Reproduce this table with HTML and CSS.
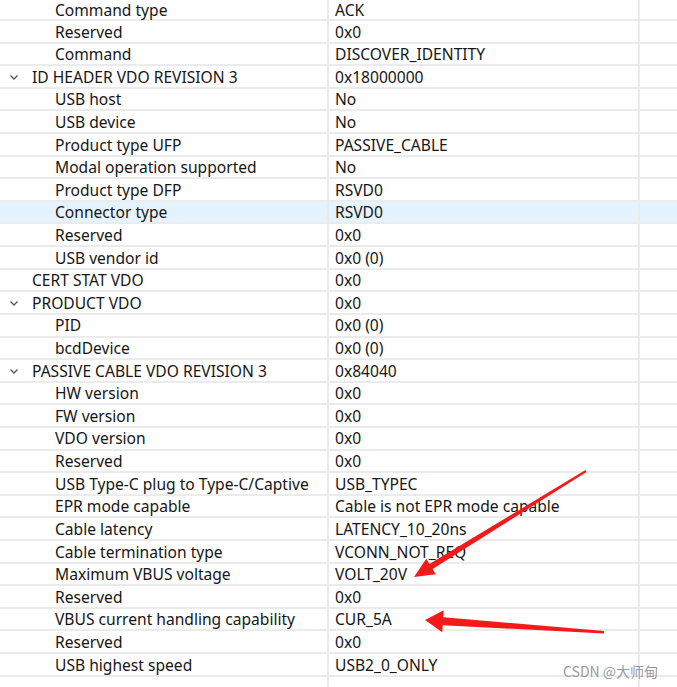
FILE: index.html
```html
<!DOCTYPE html>
<html>
<head>
<meta charset="utf-8">
<link rel="stylesheet" href="styles.css">
</head>
<body>
<div class="tree">
  <div class="row first"><div class="name child">Command type</div><div class="val">ACK</div><div class="fill"></div></div>
  <div class="row"><div class="name child">Reserved</div><div class="val">0x0</div><div class="fill"></div></div>
  <div class="row"><div class="name child">Command</div><div class="val">DISCOVER_IDENTITY</div><div class="fill"></div></div>
  <div class="row"><div class="name group"><svg class="chev" viewBox="0 0 8 5"><path d="M0.5 0.5 L4 4 L7.5 0.5" /></svg>ID HEADER VDO REVISION 3</div><div class="val">0x18000000</div><div class="fill"></div></div>
  <div class="row"><div class="name child">USB host</div><div class="val">No</div><div class="fill"></div></div>
  <div class="row"><div class="name child">USB device</div><div class="val">No</div><div class="fill"></div></div>
  <div class="row"><div class="name child">Product type UFP</div><div class="val">PASSIVE_CABLE</div><div class="fill"></div></div>
  <div class="row"><div class="name child">Modal operation supported</div><div class="val">No</div><div class="fill"></div></div>
  <div class="row"><div class="name child">Product type DFP</div><div class="val">RSVD0</div><div class="fill"></div></div>
  <div class="row selected"><div class="name child">Connector type</div><div class="val">RSVD0</div><div class="fill"></div></div>
  <div class="row"><div class="name child">Reserved</div><div class="val">0x0</div><div class="fill"></div></div>
  <div class="row"><div class="name child">USB vendor id</div><div class="val">0x0 (0)</div><div class="fill"></div></div>
  <div class="row"><div class="name group plain">CERT STAT VDO</div><div class="val">0x0</div><div class="fill"></div></div>
  <div class="row"><div class="name group"><svg class="chev" viewBox="0 0 8 5"><path d="M0.5 0.5 L4 4 L7.5 0.5" /></svg>PRODUCT VDO</div><div class="val">0x0</div><div class="fill"></div></div>
  <div class="row"><div class="name child">PID</div><div class="val">0x0 (0)</div><div class="fill"></div></div>
  <div class="row"><div class="name child">bcdDevice</div><div class="val">0x0 (0)</div><div class="fill"></div></div>
  <div class="row"><div class="name group"><svg class="chev" viewBox="0 0 8 5"><path d="M0.5 0.5 L4 4 L7.5 0.5" /></svg>PASSIVE CABLE VDO REVISION 3</div><div class="val">0x84040</div><div class="fill"></div></div>
  <div class="row"><div class="name child">HW version</div><div class="val">0x0</div><div class="fill"></div></div>
  <div class="row"><div class="name child">FW version</div><div class="val">0x0</div><div class="fill"></div></div>
  <div class="row"><div class="name child">VDO version</div><div class="val">0x0</div><div class="fill"></div></div>
  <div class="row"><div class="name child">Reserved</div><div class="val">0x0</div><div class="fill"></div></div>
  <div class="row"><div class="name child">USB Type-C plug to Type-C/Captive</div><div class="val">USB_TYPEC</div><div class="fill"></div></div>
  <div class="row"><div class="name child">EPR mode capable</div><div class="val">Cable is not EPR mode capable</div><div class="fill"></div></div>
  <div class="row"><div class="name child">Cable latency</div><div class="val">LATENCY_10_20ns</div><div class="fill"></div></div>
  <div class="row"><div class="name child">Cable termination type</div><div class="val">VCONN_NOT_REQ</div><div class="fill"></div></div>
  <div class="row"><div class="name child">Maximum VBUS voltage</div><div class="val">VOLT_20V</div><div class="fill"></div></div>
  <div class="row"><div class="name child">Reserved</div><div class="val">0x0</div><div class="fill"></div></div>
  <div class="row"><div class="name child">VBUS current handling capability</div><div class="val">CUR_5A</div><div class="fill"></div></div>
  <div class="row"><div class="name child">Reserved</div><div class="val">0x0</div><div class="fill"></div></div>
  <div class="row"><div class="name child">USB highest speed</div><div class="val">USB2_0_ONLY</div><div class="fill"></div></div>
  <div class="row empty"><div class="name"></div><div class="val"></div><div class="fill"></div></div>
</div>
<svg class="arrows" viewBox="0 0 677 687" width="677" height="687">
  <polygon points="586.5,471.9 432.6,569.1 435.7,574.2 414,577 426.3,558.8 429.4,563.9 585.5,470.1" />
  <polygon points="604,631 443.3,617.2 443.7,610.2 425,620 442.3,632.2 442.7,625.2 604,633.5" />
</svg>
<div class="watermark">CSDN @大师甸</div>
</body>
</html>
```
FILE: styles.css
```css
html, body {
  margin: 0;
  padding: 0;
  background: #ffffff;
  overflow: hidden;
}
body {
  width: 677px;
  height: 687px;
  position: relative;
  font-family: "Noto Sans", "Noto Sans CJK SC", sans-serif;
  font-size: 15.6px;
  color: #161616;
}
.tree {
  display: flex;
  flex-direction: column;
}
.row {
  display: grid;
  grid-template-columns: 329px 311px 1fr;
  height: 22.62px;
  flex-shrink: 0;
  box-sizing: border-box;
  border-bottom: 2px solid #ebebeb;
}
.row.first {
  height: 21px;
}
.row.selected {
  background: #e5f3ff;
}
.row.empty {
  height: 40px;
  border-bottom: none;
}
.name, .val {
  border-right: 2px solid #ebebeb;
  display: flex;
  align-items: center;
  white-space: nowrap;
  line-height: 1;
  padding-top: 2px;
}
.name.child {
  padding-left: 55px;
}
.name.group {
  padding-left: 10px;
}
.name.group.plain {
  padding-left: 32px;
}
.chev {
  width: 8px;
  height: 5px;
  margin-right: 14px;
  fill: none;
  stroke: #555;
  stroke-width: 1.3;
}
.val {
  padding-left: 6px;
}
.arrows {
  position: absolute;
  left: 0;
  top: 0;
}
.arrows polygon {
  fill: #f51a1a;
}
.watermark {
  position: absolute;
  left: 563px;
  top: 661px;
  font-family: "Noto Sans CJK SC", sans-serif;
  font-size: 14px;
  color: #9a9a9a;
}
```
